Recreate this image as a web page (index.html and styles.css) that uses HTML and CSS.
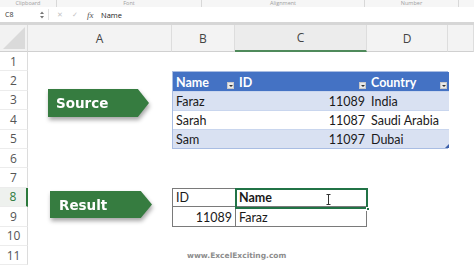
FILE: index.html
```html
<!DOCTYPE html>
<html lang="en">
<head>
  <meta charset="UTF-8">
  <title>Excel - Source and Result</title>
  <link rel="stylesheet" href="styles.css">
</head>
<body>

  <!-- Ribbon group labels -->
  <div class="ribbon">
    <div class="group g-clip">Clipboard</div>
    <div class="group g-font">Font</div>
    <div class="group g-align">Alignment</div>
    <div class="group g-num">Number</div>
    <div class="group g-rest"></div>
  </div>

  <!-- Formula bar -->
  <div class="fbar">
    <div class="namebox">
      <span>C8</span>
      <span class="spin">
        <svg width="4" height="8" viewBox="0 0 4 8"><path d="M0 3 L2 0.5 L4 3 Z M0 5 L2 7.5 L4 5 Z" fill="#777"/></svg>
      </span>
    </div>
    <div class="fbtns">
      <span class="fb-x">&#x2715;</span>
      <span class="fb-ok">&#x2713;</span>
      <span class="fb-fx">fx</span>
    </div>
    <div class="formula">Name</div>
  </div>
  <div class="divider"></div>

  <!-- Sheet -->
  <div class="sheet">
    <div class="corner"><div class="tri"></div></div>
    <div class="colhead">A</div>
    <div class="colhead">B</div>
    <div class="colhead active">C</div>
    <div class="colhead">D</div>
    <div class="colhead"></div>

    <div class="rowhead" style="grid-row: 2">1</div>
    <div class="rowhead" style="grid-row: 3">2</div>
    <div class="rowhead" style="grid-row: 4">3</div>
    <div class="rowhead" style="grid-row: 5">4</div>
    <div class="rowhead" style="grid-row: 6">5</div>
    <div class="rowhead" style="grid-row: 7">6</div>
    <div class="rowhead" style="grid-row: 8">7</div>
    <div class="rowhead active" style="grid-row: 9">8</div>
    <div class="rowhead" style="grid-row: 10">9</div>
    <div class="rowhead" style="grid-row: 11">10</div>
    <div class="rowhead" style="grid-row: 12">11</div>

    <!-- Source table B2:D5 -->
    <div class="xtable">
      <div class="th">Name<span class="dd"></span></div>
      <div class="th">ID<span class="dd"></span></div>
      <div class="th">Country<span class="dd"></span></div>

      <div class="td band">Faraz</div>
      <div class="td band num">11089</div>
      <div class="td band">India</div>

      <div class="td">Sarah</div>
      <div class="td num">11087</div>
      <div class="td">Saudi Arabia</div>

      <div class="td band last">Sam</div>
      <div class="td band num last">11097</div>
      <div class="td band last">Dubai<span class="resize"></span></div>
    </div>

    <!-- Result B8:C9 -->
    <div class="result">
      <div class="rc">ID</div>
      <div class="rc bold">Name</div>
      <div class="rc num">11089</div>
      <div class="rc">Faraz</div>
      <div class="sel"><span class="handle"></span></div>
      <svg class="ibeam" width="5" height="11" viewBox="0 0 5 11"><path d="M0.5 0.5 H4.5 M2.5 0.5 V10.5 M0.5 10.5 H4.5" stroke="#333" stroke-width="1" fill="none"/></svg>
    </div>

    <div class="site">www.ExcelExciting.com</div>

    <!-- floating shapes -->
    <div class="arrow arrow-source"><div class="arrow-body">Source</div></div>
    <div class="arrow arrow-result"><div class="arrow-body">Result</div></div>
  </div>

</body>
</html>
```

FILE: styles.css
```css
* {
  box-sizing: border-box;
}

body {
  margin: 0;
  width: 474px;
  height: 266px;
  overflow: hidden;
  background: #ffffff;
  font-family: 'Lato', 'Open Sans', sans-serif;
  color: #1a1a1a;
}

/* ribbon labels */
.ribbon {
  display: flex;
  height: 7px;
  background: #f6f6f6;
  font-family: 'Open Sans', sans-serif;
  font-size: 5.5px;
  color: #a0a0a0;
  line-height: 6px;
}

.group {
  text-align: center;
  border-right: 1px solid #d8d8d8;
  height: 7px;
}

.g-clip { width: 57px; }
.g-font { width: 145px; }
.g-align { width: 163px; }
.g-num { width: 94px; }
.g-rest { flex: 1; border-right: none; }

/* formula bar */
.fbar {
  display: flex;
  align-items: center;
  height: 15px;
  background: #ffffff;
  font-family: 'Open Sans', sans-serif;
  font-size: 7px;
  color: #333;
}

.namebox {
  width: 48px;
  display: flex;
  align-items: center;
  justify-content: space-between;
  padding: 0 4px 0 5px;
}

.spin {
  display: flex;
}

.fbtns {
  display: flex;
  align-items: center;
  gap: 9px;
  padding-left: 8px;
  width: 53px;
  height: 11px;
  border-left: 1px solid #e2e2e2;
  color: #c4c4c4;
  font-size: 7px;
}

.fb-fx {
  font-family: 'Liberation Serif', serif;
  font-style: italic;
  font-size: 9px;
  color: #555;
}

.formula {
  font-size: 7.5px;
  color: #222;
}

.divider {
  height: 3px;
  background: #d6d6d6;
}

/* sheet grid */
.sheet {
  position: relative;
  display: grid;
  grid-template-columns: 28px 144px 63px 132px 81px 1fr;
  grid-template-rows: 27px repeat(11, 19.4px);
}

.corner {
  background: #f2f2f2;
  border-right: 1px solid #dcdcdc;
  border-bottom: 1px solid #d0d0d0;
  position: relative;
  overflow: hidden;
}

.tri {
  position: absolute;
  right: 2px;
  bottom: 2px;
  width: 0;
  height: 0;
  border-left: 22px solid transparent;
  border-bottom: 22px solid #dadada;
}

.colhead {
  background: #f3f3f3;
  border-right: 1px solid #dddddd;
  border-bottom: 1px solid #d0d0d0;
  display: flex;
  align-items: center;
  justify-content: center;
  font-family: 'Open Sans', sans-serif;
  font-size: 12px;
  color: #444;
}

.colhead.active {
  background: #ececec;
  border-bottom: 2px solid #4f8a5b;
}

.rowhead {
  grid-column: 1;
  border-right: 1px solid #dcdcdc;
  border-bottom: 1px solid #ececec;
  display: flex;
  align-items: center;
  justify-content: center;
  font-family: 'Open Sans', sans-serif;
  font-size: 12px;
  color: #555;
}

.rowhead.active {
  background: #eef1ee;
  color: #2c7a3c;
  border-right: 2px solid #2c7a3c;
}

/* Excel table */
.xtable {
  grid-column: 3 / 6;
  grid-row: 3 / 7;
  display: grid;
  grid-template-columns: 63px 132px 81px;
  grid-template-rows: repeat(4, 1fr);
  border: 1px solid #a9bde3;
  font-size: 12.5px;
}

.th,
.td {
  position: relative;
  display: flex;
  align-items: flex-end;
  padding: 0 3px 1px;
  white-space: nowrap;
}

.th {
  background: #4472c4;
  color: #ffffff;
  font-weight: bold;
}

.td {
  background: #ffffff;
  border-top: 1px solid #c9d6ee;
}

.td.band {
  background: #d9e1f2;
}

.td.num {
  justify-content: flex-end;
}

.dd {
  position: absolute;
  right: 2px;
  bottom: 2px;
  width: 7px;
  height: 7px;
  background: #e9e9e9;
  border: 1px solid #c9c9c9;
}

.dd::after {
  content: "";
  position: absolute;
  left: 1px;
  top: 2px;
  border-left: 2px solid transparent;
  border-right: 2px solid transparent;
  border-top: 2px solid #333;
}

.resize {
  position: absolute;
  right: 0;
  bottom: 0;
  width: 0;
  height: 0;
  border-left: 4px solid transparent;
  border-bottom: 4px solid #3b5ea8;
}

/* result block */
.result {
  grid-column: 3 / 5;
  grid-row: 9 / 11;
  position: relative;
  display: grid;
  grid-template-columns: 63px 132px;
  grid-template-rows: repeat(2, 1fr);
  border: 1px solid #7a7a7a;
  font-size: 12.5px;
}

.rc {
  display: flex;
  align-items: flex-end;
  padding: 0 3px 1px;
  border-right: 1px solid #7a7a7a;
  border-bottom: 1px solid #7a7a7a;
}

.rc:nth-child(2n) {
  border-right: none;
}

.rc:nth-child(n+3) {
  border-bottom: none;
}

.rc.bold {
  font-weight: bold;
}

.rc.num {
  justify-content: flex-end;
}

.sel {
  position: absolute;
  left: 62px;
  top: -1px;
  width: 133px;
  height: 21px;
  border: 2px solid #217346;
}

.handle {
  position: absolute;
  right: -4px;
  bottom: -4px;
  width: 4px;
  height: 4px;
  background: #217346;
  border: 1px solid #fff;
}

.ibeam {
  position: absolute;
  left: 153px;
  top: 5px;
}

.site {
  grid-column: 2 / 5;
  grid-row: 12;
  padding-left: 159px;
  display: flex;
  align-items: center;
  font-family: 'DejaVu Sans', sans-serif;
  font-weight: bold;
  font-size: 7.5px;
  color: #8d8d8d;
}

/* arrow callouts */
.arrow {
  position: absolute;
  filter: drop-shadow(1px 3px 2px rgba(0, 0, 0, 0.35));
}

.arrow-body {
  display: flex;
  align-items: center;
  height: 100%;
  padding-left: 8px;
  background: #367c40;
  color: #ffffff;
  font-family: 'DejaVu Sans', sans-serif;
  font-weight: bold;
  font-size: 13.5px;
  clip-path: polygon(0 0, 89% 0, 100% 50%, 89% 100%, 0 100%);
}

.arrow-source {
  left: 48px;
  top: 64px;
  width: 101px;
  height: 28px;
}

.arrow-result {
  left: 50px;
  top: 166px;
  width: 102px;
  height: 27px;
}

.arrow-result .arrow-body {
  padding-left: 9px;
}
```
